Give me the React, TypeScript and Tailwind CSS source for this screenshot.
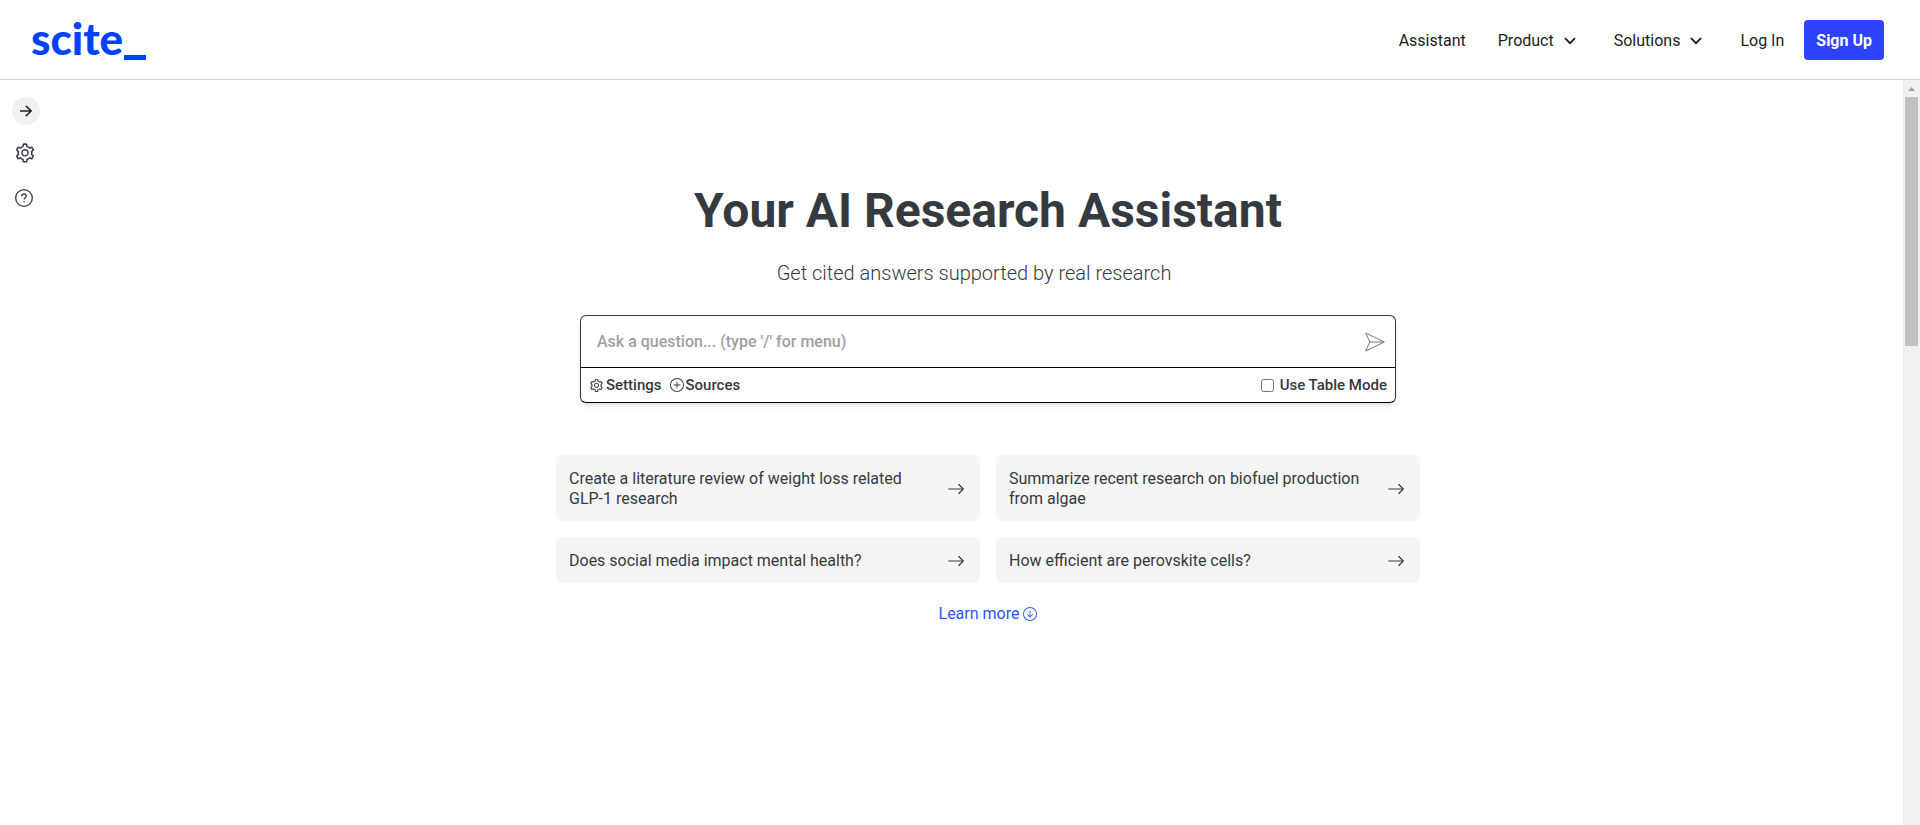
import React from 'react';
import { AiOutlineSetting } from 'react-icons/ai';
import { BsArrowRight, BsArrowDownCircle, BsPlusCircle } from 'react-icons/bs';

const suggestions = [
  'Create a literature review of weight loss related GLP-1 research',
  'Summarize recent research on biofuel production from algae',
  'Does social media impact mental health?',
  'How efficient are perovskite cells?',
];

const Logo: React.FC = () => (
  <a href="#" aria-label="scite home" className="flex items-end gap-px pb-1 text-[#0043ff]">
    <span className="font-[Lato,sans-serif] text-[44px] leading-12 font-black">scite</span>
    <span className="mb-0.5 h-[5px] w-[22px] bg-current" />
  </a>
);

const Chevron: React.FC = () => (
  <svg width="12" height="8" viewBox="0 0 12 8" fill="none" stroke="currentColor" strokeWidth="1.8" aria-hidden="true">
    <path d="M1 1.2 6 6.2 11 1.2" />
  </svg>
);

const Header: React.FC = () => (
  <header className="flex h-20 shrink-0 items-center justify-between border-b border-[#d5d5d5] pr-9 pl-[31px]">
    <Logo />
    <nav className="flex items-center text-base text-[#1a1d21]">
      <a href="#" className="pt-0.5">Assistant</a>
      <button type="button" className="ml-8 flex items-center gap-2.5 pt-0.5">
        Product <Chevron />
      </button>
      <button type="button" className="ml-[38px] flex items-center gap-2.5 pt-0.5">
        Solutions <Chevron />
      </button>
      <a href="#" className="ml-[38px] pt-0.5">Log In</a>
      <a href="#" className="ml-5 flex h-10 items-center rounded bg-[#2e42ff] px-3 pt-0.5 font-bold text-white">
        Sign Up
      </a>
    </nav>
  </header>
);

const Sidebar: React.FC = () => (
  <aside className="flex w-[73px] shrink-0 flex-col items-start pt-[17px] pl-3 text-[#343a40]">
    <button type="button" aria-label="Expand" className="flex size-7 items-center justify-center rounded-full bg-[#f1f1f1] text-[#222]">
      <svg width="12" height="12" viewBox="0 0 12 12" fill="none" stroke="currentColor" strokeWidth="1.6" aria-hidden="true">
        <path d="M0 6h11M5.8.8 11 6l-5.200 5.200" />
      </svg>
    </button>
    <button type="button" aria-label="Settings" className="mt-[17px] ml-0.5">
      <AiOutlineSetting className="size-[22px]" />
    </button>
    <button type="button" aria-label="Help" className="mt-[25px] ml-[3px]">
      <svg width="18" height="18" viewBox="0 0 18 18" fill="none" stroke="currentColor" strokeWidth="1.3" aria-hidden="true">
        <circle cx="9" cy="9" r="8.300" />
        <path d="M6.700 7.200C6.700 5.800 7.700 5 9 5s2.300.9 2.300 2.100c0 1.500-2.200 1.700-2.200 3.500" />
        <circle cx="9.100" cy="12.700" r=".8" fill="currentColor" stroke="none" />
      </svg>
    </button>
  </aside>
);

const AskBox: React.FC = () => (
  <form className="mx-6 rounded-md border border-[#343a40] border-b-black bg-white shadow-md" onSubmit={(e) => e.preventDefault()}>
    <div className="flex h-[52px] items-center border-b border-black pr-2.5 pl-4">
      <input
        type="text"
        aria-label="Ask a question"
        placeholder="Ask a question... (type '/' for menu)"
        className="min-w-0 flex-1 text-base font-medium outline-none placeholder:text-[#a0a0a0]"
      />
      <button type="submit" aria-label="Send" className="text-[#777]">
        <svg width="20" height="20" viewBox="0 0 20 20" fill="none" stroke="currentColor" strokeLinejoin="round" aria-hidden="true">
          <path d="M.7 1 19.300 10 .7 19 4.800 10ZM4.800 10h14" />
        </svg>
      </button>
    </div>
    <div className="flex h-[34px] items-center gap-2 px-2 text-[15px] font-medium text-[#343a40]">
      <button type="button" className="flex items-center gap-0.5">
        <AiOutlineSetting className="size-[15px]" /> Settings
      </button>
      <button type="button" className="flex items-center gap-0.5">
        <BsPlusCircle className="size-3.5" /> Sources
      </button>
      <label className="ml-auto flex items-center gap-1.5">
        <input type="checkbox" className="size-[13px]" /> Use Table Mode
      </label>
    </div>
  </form>
);

const ScrollTrack: React.FC = () => (
  <div className="flex w-[17px] shrink-0 flex-col items-center bg-[#f0f0f0]" aria-hidden="true">
    <svg width="17" height="17" viewBox="0 0 17 17" fill="#a3a3a3">
      <path d="M5 11 8.500 7 12 11Z" />
    </svg>
    <div className="h-[249px] w-[13px] bg-[#c1c1c1]" />
  </div>
);

const App: React.FC = () => (
  <div className="flex h-screen flex-col bg-white font-[Roboto,'Liberation_Sans',sans-serif]">
    <Header />
    <div className="flex min-h-0 flex-1">
      <Sidebar />
      <main className="flex-1 overflow-hidden pt-[101px]">
        <div className="mx-auto max-w-[864px] text-[#343a40]">
          <h1 className="text-center text-5xl leading-[60px] font-bold">Your AI Research Assistant</h1>
          <p className="mt-4 mb-[26px] pr-7 text-center text-xl leading-8 font-light">
            Get cited answers supported by real research
          </p>
          <AskBox />
          <div className="mt-[52px] grid grid-cols-2 gap-4">
            {suggestions.map((text) => (
              <button
                key={text}
                type="button"
                className="flex items-center justify-between gap-6 rounded-md bg-[#f5f5f5] pt-3.5 pr-[15px] pb-3 pl-[13px] text-left text-base leading-5"
              >
                {text}
                <BsArrowRight className="size-[18px] shrink-0" />
              </button>
            ))}
          </div>
          <a href="#" className="mt-[19px] flex items-center justify-center gap-1 text-base text-[#2e52ff]">
            Learn more <BsArrowDownCircle className="size-3.5" />
          </a>
        </div>
      </main>
      <ScrollTrack />
    </div>
  </div>
);

export default App;
